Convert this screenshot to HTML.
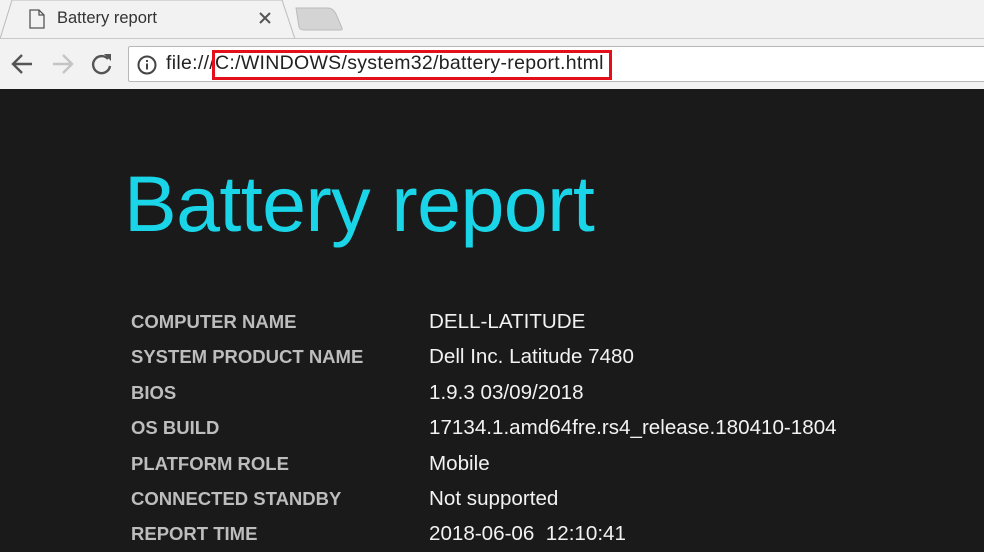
<!DOCTYPE html>
<html><head><meta charset="utf-8"><style>
*{margin:0;padding:0;box-sizing:border-box}
body{width:984px;height:552px;overflow:hidden;font-family:"Liberation Sans",sans-serif;background:#1a1a1a;position:relative}
.tabbar{position:absolute;left:0;top:0;width:984px;height:39px;background:#f2f2f2}
.toolbar{position:absolute;left:0;top:38px;width:984px;height:51px;background:#f2f2f2;border-top:1px solid #c8c8c8}
.omni{position:absolute;left:128px;top:46px;width:870px;height:36px;background:#fff;border:1px solid #b8b8b8;border-radius:2px}
.url{position:absolute;left:166px;top:52px;font-size:19.5px;letter-spacing:0.3px;color:#222}
.red{position:absolute;left:212px;top:50px;width:400px;height:30px;border:3px solid #e3101b}
.t{position:absolute;color:#fff}
.title{position:absolute;left:124px;top:158px;font-size:79px;color:#1ad5e8;letter-spacing:-0.6px}
.l{position:absolute;left:131px;font-size:18.5px;font-weight:bold;color:#bdbdbd}
.v{position:absolute;left:429px;font-size:20.6px;color:#f2f2f2}
</style></head><body>
<div class="tabbar"></div>
<svg style="position:absolute;left:0;top:0" width="400" height="40">
<path d="M0 39 L12 0" stroke="#bbb" fill="none"/>
<path d="M12 0 L282 0 L295 39" stroke="#bbb" fill="#f2f2f2"/>
<path d="M296 8 L328 8 Q333 8 336 14 L342 28 Q343 30 340 30 L304 30 Q300 30 299 27 Z" fill="#d4d4d4" stroke="#bbb"/>
<path d="M30 10 L39 10 L44 15 L44 28 L30 28 Z M39 10 L39 15 L44 15" stroke="#555" stroke-width="1.3" fill="none"/>
<path d="M260 13 L270 23 M270 13 L260 23" stroke="#555" stroke-width="2"/>
</svg>
<div class="t" style="left:57px;top:9px;font-size:16.5px;color:#333">Battery report</div>
<div class="toolbar"></div>
<svg style="position:absolute;left:0;top:40px" width="130" height="48">
<path d="M13 24 L32 24 M22 15 L13 24 L22 33" stroke="#555" stroke-width="2.4" fill="none"/>
<path d="M53 24 L72 24 M63 15 L72 24 L63 33" stroke="#c4c4c4" stroke-width="2.4" fill="none"/>
<path d="M108 19 A8.5 8.5 0 1 0 110 26" stroke="#555" stroke-width="2.4" fill="none"/>
<path d="M104 14 L111 14 L111 21 Z" fill="#555"/>
</svg>
<div class="omni"></div>
<svg style="position:absolute;left:136px;top:54px" width="22" height="22"><circle cx="11" cy="11" r="8.5" stroke="#444" stroke-width="2" fill="none"/><rect x="10" y="9.5" width="2" height="6" fill="#444"/><rect x="10" y="6" width="2" height="2" fill="#444"/></svg>
<div class="url">file:///C:/WINDOWS/system32/battery-report.html</div>
<div class="red"></div>
<div class="title">Battery report</div>
<div class="l" style="top:311px">COMPUTER NAME</div><div class="v" style="top:310px">DELL-LATITUDE</div>
<div class="l" style="top:346px">SYSTEM PRODUCT NAME</div><div class="v" style="top:345px">Dell Inc. Latitude 7480</div>
<div class="l" style="top:382px">BIOS</div><div class="v" style="top:381px">1.9.3 03/09/2018</div>
<div class="l" style="top:417px">OS BUILD</div><div class="v" style="top:416px">17134.1.amd64fre.rs4_release.180410-1804</div>
<div class="l" style="top:453px">PLATFORM ROLE</div><div class="v" style="top:452px">Mobile</div>
<div class="l" style="top:488px">CONNECTED STANDBY</div><div class="v" style="top:487px">Not supported</div>
<div class="l" style="top:523px">REPORT TIME</div><div class="v" style="top:522px">2018-06-06&nbsp; 12:10:41</div>
</body></html>
